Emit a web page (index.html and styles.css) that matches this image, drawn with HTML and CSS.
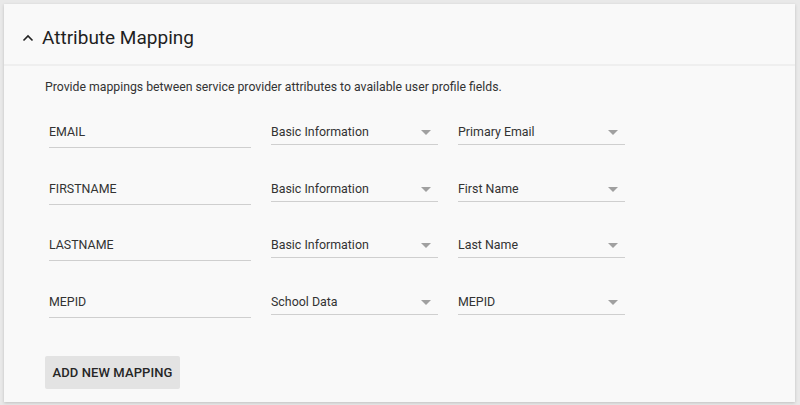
FILE: index.html
```html
<!DOCTYPE html>
<html lang="en">
<head>
<meta charset="utf-8">
<title>Attribute Mapping</title>
<link rel="stylesheet" href="styles.css">
</head>
<body>
<section class="card">
  <header class="card-header">
    <svg class="chevron" width="12" height="8" viewBox="0 0 12 8" aria-hidden="true">
      <path d="M1.5 6.5 L6 2 L10.5 6.5" fill="none" stroke="#222" stroke-width="1.6"/>
    </svg>
    <h2 class="title">Attribute Mapping</h2>
  </header>
  <div class="card-body">
    <p class="desc">Provide mappings between service provider attributes to available user profile fields.</p>
    <div class="rows">
      <div class="row">
        <div class="input">EMAIL</div>
        <div class="select"><span>Basic Information</span><i class="caret"></i></div>
        <div class="select"><span>Primary Email</span><i class="caret"></i></div>
      </div>
      <div class="row">
        <div class="input">FIRSTNAME</div>
        <div class="select"><span>Basic Information</span><i class="caret"></i></div>
        <div class="select"><span>First Name</span><i class="caret"></i></div>
      </div>
      <div class="row">
        <div class="input">LASTNAME</div>
        <div class="select"><span>Basic Information</span><i class="caret"></i></div>
        <div class="select"><span>Last Name</span><i class="caret"></i></div>
      </div>
      <div class="row">
        <div class="input">MEPID</div>
        <div class="select"><span>School Data</span><i class="caret"></i></div>
        <div class="select"><span>MEPID</span><i class="caret"></i></div>
      </div>
    </div>
    <button class="btn" type="button">ADD NEW MAPPING</button>
  </div>
</section>
</body>
</html>
```

FILE: styles.css
```css
html, body {
  margin: 0;
  padding: 0;
}
body {
  background: #e9e9e9;
  font-family: Roboto, "Noto Sans", "Liberation Sans", sans-serif;
  color: #222;
  padding: 4px 5px 3px 4px;
  height: 405px;
  box-sizing: border-box;
  overflow: hidden;
}
.card {
  background: #f9f9f9;
  box-shadow: 0 1px 3px rgba(0,0,0,0.18);
  height: 398px;
}
.card-header {
  height: 62px;
  display: flex;
  align-items: center;
  padding-left: 18px;
  padding-top: 7px;
  border-bottom: 2px solid #efefef;
  box-sizing: border-box;
}
.chevron {
  display: block;
  margin-right: 8px;
  margin-top: 1px;
}
.title {
  margin: 0;
  font-size: 19px;
  font-weight: 400;
  color: #1f1f1f;
  letter-spacing: 0;
}
.card-body {
  padding: 13px 0 0 41px;
}
.desc {
  margin: 0;
  font-size: 12.25px;
  line-height: 16px;
  color: #333;
}
.rows {
  margin-top: 29px;
  display: flex;
  flex-direction: column;
  gap: 32.5px;
}
.row {
  display: flex;
  align-items: flex-start;
}
.input {
  margin-left: 4px;
  width: 202px;
  font-size: 12.4px;
  line-height: 16px;
  padding-bottom: 7px;
  border-bottom: 1.5px solid #cfcfcf;
  color: #333;
}
.select {
  position: relative;
  width: 167px;
  margin-left: 20px;
  font-size: 12.4px;
  line-height: 16px;
  padding-bottom: 4px;
  border-bottom: 1.5px solid #cfcfcf;
  color: #333;
}
.select + .select {
  margin-left: 20px;
}
.caret {
  position: absolute;
  right: 7px;
  top: 6px;
  width: 0;
  height: 0;
  border-left: 5px solid transparent;
  border-right: 5px solid transparent;
  border-top: 5px solid #a0a0a0;
}
.btn {
  margin-top: 38px;
  font-family: inherit;
  font-size: 13px;
  font-weight: 500;
  color: #262626;
  background: #e3e3e3;
  border: none;
  border-radius: 2px;
  height: 33px;
  width: 135px;
  padding: 0;
  letter-spacing: 0.1px;
}
```
